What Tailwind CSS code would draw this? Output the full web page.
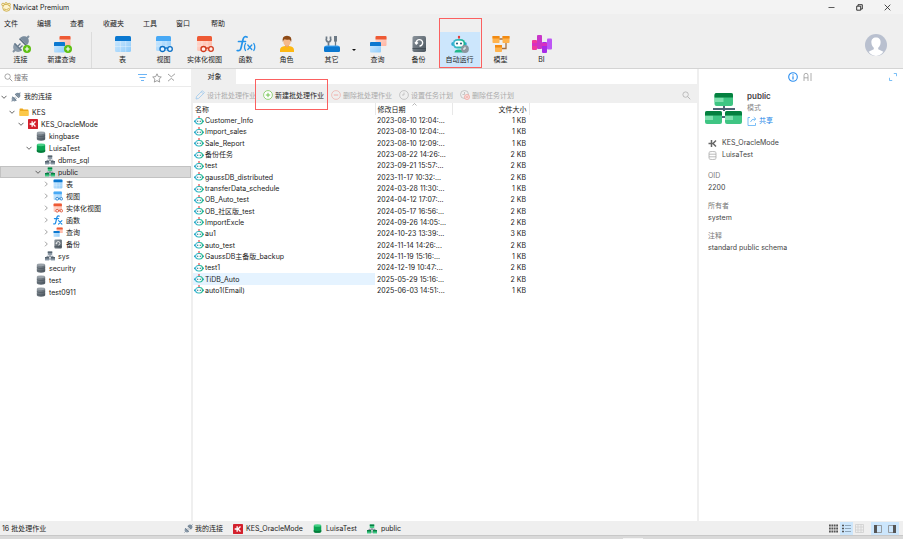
<!DOCTYPE html>
<html lang="zh-CN">

<head>
  <meta charset="UTF-8">
  <meta name="viewport" content="width=device-width, initial-scale=1.0">
  <title>Navicat Premium</title>
  <script src="https://cdn.jsdelivr.net/npm/@tailwindcss/browser@4"></script>
</head>

<body class="flex flex-col h-screen overflow-hidden bg-white font-[Inter,'Noto_Sans_CJK_SC',sans-serif] text-[7px] leading-[11px] text-[#222]">

  <!-- Icon sprites -->
  <svg class="absolute size-0">
    <defs>
      <linearGradient id="g-blue" x1="0" y1="0" x2="1" y2="1"><stop offset="0" stop-color="#d4ecff"/><stop offset="1" stop-color="#8ecbfa"/></linearGradient>
      <linearGradient id="g-red" x1="0" y1="0" x2="1" y2="1"><stop offset="0" stop-color="#ffe0d8"/><stop offset="1" stop-color="#ffb3a0"/></linearGradient>
      <linearGradient id="g-teal" x1="0" y1="0" x2="1" y2="0"><stop offset="0" stop-color="#3fb8d8"/><stop offset="1" stop-color="#1fb88a"/></linearGradient>
      <linearGradient id="g-gray" x1="0" y1="0" x2="1" y2="1"><stop offset="0" stop-color="#8b949c"/><stop offset="1" stop-color="#4a545d"/></linearGradient>

      <symbol id="i-plug" viewBox="0 0 18 18">
        <path d="M1 17l3-3M14 4l3-3" stroke="#8494a3" stroke-width="2"/>
        <path d="M3 8l7 7c-2 2.500-5.500 2.500-7.500.5S.8 10 3 8z" fill="#8a9aa9"/>
        <path d="M3 8l7 7-1 1-7-7z" fill="#677a8c"/>
        <path d="M6 11l2.500-2.500M8 13l2.500-2.500" stroke="#677a8c" stroke-width="1.300"/>
        <path d="M8 3l7 7c2.300-2 2.500-5.500.5-7.500S10 .8 8 3z" fill="#7b8d9e"/>
        <path d="M8 3l7 7-1.300 1-6.700-6.700z" fill="#5d7082"/>
      </symbol>
      <symbol id="i-plus" viewBox="0 0 8 8">
        <circle cx="4" cy="4" r="4" fill="#5cbf10"/>
        <path d="M4 1.800v4.400M1.800 4h4.400" stroke="#fff" stroke-width="1.100"/>
      </symbol>
      <symbol id="i-table" viewBox="0 0 18 18">
        <rect x="1" y="1" width="16" height="16" rx="1.500" fill="url(#g-blue)"/>
        <path d="M6.300 6v11M11.700 6v11M1 11.500h16" stroke="#fff" stroke-opacity=".45" stroke-width=".7"/>
        <path d="M1 6V2.500Q1 1 2.500 1h13Q17 1 17 2.500V6z" fill="#0b78d0"/>
      </symbol>
      <symbol id="i-view" viewBox="0 0 18 18">
        <rect x="1" y="1" width="15" height="15" rx="1.500" fill="url(#g-blue)"/>
        <path d="M6 6v10M11 6v10M1 11h15" stroke="#fff" stroke-opacity=".45" stroke-width=".7"/>
        <path d="M1 6V2.500Q1 1 2.500 1h12Q16 1 16 2.500V6z" fill="#48a9f5"/>
        <g fill="#eaf5ff" stroke="#0b6fc4" stroke-width="1.300"><circle cx="7.500" cy="14" r="2.500"/><circle cx="15" cy="14" r="2.300"/><path d="M10 13.500q1.200-1.200 2.600 0" fill="none"/></g>
      </symbol>
      <symbol id="i-mview" viewBox="0 0 18 18">
        <rect x="1" y="1" width="15" height="15" rx="1.500" fill="url(#g-red)"/>
        <path d="M6 6v10M11 6v10M1 11h15" stroke="#fff" stroke-opacity=".45" stroke-width=".7"/>
        <path d="M1 6V2.500Q1 1 2.500 1h12Q16 1 16 2.500V6z" fill="#ee5a35"/>
        <g fill="#fff0ec" stroke="#d23a1c" stroke-width="1.300"><circle cx="7.500" cy="14" r="2.500"/><circle cx="15" cy="14" r="2.300"/><path d="M10 13.500q1.200-1.200 2.600 0" fill="none"/></g>
      </symbol>
      <symbol id="i-query" viewBox="0 0 18 18">
        <rect x="6.500" y="1" width="11" height="10" rx="1" fill="url(#g-red)"/>
        <path d="M6.500 4.500V2q0-1 1-1h9q1 0 1 1v2.500z" fill="#ee5a35"/>
        <rect x="1" y="7" width="11" height="10.500" rx="1" fill="url(#g-blue)"/>
        <path d="M1 11V8q0-1 1-1h9q1 0 1 1v3z" fill="#0b78d0"/>
      </symbol>
      <symbol id="i-fx" viewBox="0 0 20 18">
        <g fill="none" stroke="#2493ea" stroke-linecap="round">
          <path d="M11 2q-3-1.500-4 2.500L5 13q-.8 3.500-3.800 2.500M2.500 6.500h7" stroke-width="1.700"/>
          <path d="M9.500 8.500q-2 3.500 0 7M17.800 8.500q2 3.500 0 7M11.800 10l4 4.500M15.800 10l-4 4.500" stroke-width="1.300"/>
        </g>
      </symbol>
      <symbol id="i-fxs" viewBox="0 0 18 18">
        <g fill="none" stroke="#1c8ce6" stroke-linecap="round">
          <path d="M11 2q-3-1.500-4 2.500L5 13q-.8 4-3.800 3M2.500 6.500h7.500" stroke-width="2.200"/>
          <path d="M10 10l6 6.500M16 10l-6 6.500" stroke-width="2"/>
        </g>
      </symbol>
      <symbol id="i-role" viewBox="0 0 18 18">
        <path d="M7 9h4v4H7z" fill="#eba36d"/>
        <path d="M2 17v-2q0-3.500 5-4l2 1.500 2-1.500q5 .5 5 4v2z" fill="#fdb813"/>
        <ellipse cx="9" cy="6.500" rx="3.600" ry="4.300" fill="#f5b98a"/>
        <path d="M4.800 7Q3.600.8 9 .8T13.200 7q-1-2.600-2-2.600-3 .6-4.600-.2Q5.400 5 4.800 7z" fill="#8d4a16"/>
      </symbol>
      <symbol id="i-tools" viewBox="0 0 18 18">
        <path d="M5.500 12V7M5.500 7a2.400 2.400 0 01-2-3.500L3.500 1.500M5.500 7a2.400 2.400 0 002-3.500L7.500 1.500" fill="none" stroke="#6d7a86" stroke-width="1.700"/>
        <path d="M12.500 12V6" stroke="#6d7a86" stroke-width="1.300"/><path d="M11 1h3v5l-.8 1h-1.400L11 6z" fill="#6d7a86"/>
        <path d="M1 12l2-1.500h12l2 1.500z" fill="#48a9f5"/>
        <rect x="1" y="11.500" width="16" height="5.500" rx="1.200" fill="#0b78d0"/>
      </symbol>
      <symbol id="i-backup" viewBox="0 0 18 18">
        <rect x="2.500" y="1" width="13.500" height="16" rx="1.800" fill="url(#g-gray)"/>
        <path d="M2.500 13.500H16" stroke="#3e474f" stroke-width=".8"/>
        <path d="M6.300 8.500A3.200 3.200 0 119.500 11M5 7.200l1.300 1.700L8 7.500" fill="none" stroke="#fff" stroke-width="1.400"/>
      </symbol>
      <symbol id="i-robot" viewBox="0 0 18 18">
        <path d="M8 3v3" stroke="#e04a4a" stroke-width="1"/><circle cx="8" cy="2" r="1.200" fill="#e23d3d"/>
        <rect x=".2" y="7" width="15.600" height="4" rx="2" fill="#2aaad0"/>
        <rect x="1.800" y="4" width="12.400" height="9.500" rx="4.500" fill="url(#g-teal)"/>
        <rect x="3.500" y="5.800" width="9" height="5.800" rx="2.800" fill="#fff"/>
        <circle cx="6" cy="8.500" r="1" fill="#145a73"/><circle cx="10" cy="8.500" r="1" fill="#145a73"/>
        <path d="M3.500 17.500q0-3 4.500-3t4.500 3z" fill="#1fb88a"/>
        <circle cx="14" cy="14" r="3.900" fill="#8c969f"/><path d="M14 11.800V14h-2" fill="none" stroke="#fff"/>
      </symbol>
      <symbol id="i-bot" viewBox="0 0 18 18">
        <path d="M9 0v4" stroke="#e23d3d" stroke-width="2"/>
        <rect x="0" y="7.500" width="18" height="4" rx="2" fill="#1a9fb8"/>
        <rect x="2.800" y="4.500" width="12.400" height="10" rx="5" fill="#fff" stroke="url(#g-teal)" stroke-width="1.900"/>
        <path d="M5.500 9.500h2.200M10.300 9.500h2.200" stroke="#27606f" stroke-width="2"/>
      </symbol>
      <symbol id="i-model" viewBox="0 0 18 18">
        <path d="M6 4h8v9.500H9" fill="none" stroke="#a8703c" stroke-width="1.300"/>
        <g fill="#ffb34d"><rect x=".5" y="1" width="7" height="7" rx=".8"/><rect x="10.500" y="1" width="7" height="7" rx=".8"/><rect x="3" y="10" width="7" height="7" rx=".8"/></g>
        <path d="M.5 3.500V1h7v2.500zM10.500 3.500V1h7v2.500zM3 12.500V10h7v2.500z" fill="#f28a12"/>
      </symbol>
      <symbol id="i-bi" viewBox="0 0 20 18">
        <rect x="0" y="5" width="5" height="10" rx="1" fill="#ee3a9c"/><rect x="5" y="0" width="5" height="14" rx="1" fill="#c936c9"/>
        <rect x="10" y="7" width="5" height="11" rx="1" fill="#a62ce8"/><rect x="15" y="3.500" width="5" height="11" rx="1" fill="#bd56f5"/>
        <path d="M0 8h5v3H0zM10 8h5v3h-5z" fill="#d92fc0"/>
      </symbol>
      <symbol id="i-folder" viewBox="0 0 18 18">
        <path d="M1 3.500q0-1 1-1h4.500L8 4.500h8q1 0 1 1V15q0 1-1 1H2q-1 0-1-1z" fill="#eda81c"/>
        <path d="M1 7h16v8q0 1-1 1H2q-1 0-1-1z" fill="#fcc84a"/>
      </symbol>
      <symbol id="i-kes" viewBox="0 0 18 18">
        <rect width="18" height="18" rx="1.500" fill="#d3202c"/>
        <path d="M7.500 4v10M13.500 4.500L9 9l4.500 4.500M3 9h6" fill="none" stroke="#fff" stroke-width="2.400"/>
      </symbol>
      <symbol id="i-kmark" viewBox="0 0 18 18">
        <path d="M7 2v14M16 3l-6 6 6 6M1 9h9" fill="none" stroke="#666" stroke-width="3"/>
      </symbol>
      <symbol id="i-db" viewBox="0 0 18 18">
        <path d="M1.500 3.500V15q0 2.500 7.500 2.500t7.500-2.500V3.500z" fill="url(#g-gray)"/>
        <ellipse cx="9" cy="3.200" rx="7.500" ry="2.500" fill="#9aa2a9"/>
        <path d="M1.500 8q2 2 7.500 2t7.500-2M1.500 12.500q2 2 7.500 2t7.500-2" fill="none" stroke="#454e56" stroke-width=".9"/>
      </symbol>
      <symbol id="i-dbon" viewBox="0 0 18 18">
        <path d="M1.500 3.500V15q0 2.500 7.500 2.500t7.500-2.500V3.500z" fill="#0ba552"/>
        <ellipse cx="9" cy="3.200" rx="7.500" ry="2.500" fill="#47cf86"/>
        <path d="M1.500 12q2 2 7.500 2t7.500-2v3q0 2.500-7.500 2.500T1.500 15z" fill="#067a3b"/>
      </symbol>
      <symbol id="i-schema" viewBox="0 0 18 18">
        <path d="M9 6v4M3.500 12v-2.500h11V12M6 14.500h6" fill="none" stroke="#526272" stroke-width="1.300"/>
        <g fill="#8795a3"><rect x="5" y="1" width="8" height="6"/><rect x="0" y="11" width="7.500" height="6"/><rect x="10.500" y="11" width="7.500" height="6"/></g>
        <path d="M5 1h8v2.500H5zM0 11h7.500v2.500H0zM10.500 11H18v2.500h-7.500z" fill="#56646f"/>
      </symbol>
      <symbol id="i-schemaon" viewBox="0 0 18 18">
        <path d="M9 6v4M3.500 12v-2.500h11V12M6 14.500h6" fill="none" stroke="#526272" stroke-width="1.300"/>
        <g fill="#3cc680"><rect x="5" y="1" width="8" height="6"/><rect x="0" y="11" width="7.500" height="6"/><rect x="10.500" y="11" width="7.500" height="6"/></g>
        <path d="M5 1h8v2.500H5zM0 11h7.500v2.500H0zM10.500 11H18v2.500h-7.500z" fill="#067f42"/>
      </symbol>
      <symbol id="i-search" viewBox="0 0 10 10">
        <circle cx="4" cy="4" r="3" fill="none" stroke="currentColor" stroke-width=".8"/><path d="M6.200 6.200L9.200 9.200" stroke="currentColor" stroke-width=".9"/>
      </symbol>
      <symbol id="i-down" viewBox="0 0 6 6"><path d="M.5 1.800L3 4.300l2.500-2.500" fill="none" stroke="#555" stroke-width=".9"/></symbol>
      <symbol id="i-right" viewBox="0 0 6 6"><path d="M2 .7L4.300 3 2 5.300" fill="none" stroke="#888" stroke-width=".8"/></symbol>
    </defs>
  </svg>

  <!-- Title bar -->
  <header class="flex h-[14px] shrink-0 items-center bg-[#f3f3f3] pl-px pr-3">
    <svg class="size-[10px]" viewBox="0 0 10 10"><g fill="#fdf3cf" stroke="#c9a73c" stroke-width=".8"><circle cx="5.500" cy="5.500" r="3.800"/><circle cx="2" cy="2.500" r="1.300"/><circle cx="5" cy="1.600" r="1.100"/><circle cx="8.200" cy="2.500" r="1.200"/><path d="M3 7q2.500 1.500 5-.5" fill="none"/></g></svg>
    <h1 class="ml-[2px]">Navicat Premium</h1>
    <div class="ml-auto flex items-center gap-[21px]">
      <button aria-label="最小化"><svg class="size-[7px]" viewBox="0 0 7 7"><path d="M.5 3.500h6" stroke="#333" stroke-width=".8"/></svg></button>
      <button aria-label="还原"><svg class="size-[7px]" viewBox="0 0 7 7"><path d="M.7 2.200h4v4h-4zM2 2V.7h4.300V5H5" fill="none" stroke="#222" stroke-width=".9"/></svg></button>
      <button aria-label="关闭"><svg class="size-[7px]" viewBox="0 0 7 7"><path d="M.7.7l5.600 5.600M6.300.7L.7 6.300" stroke="#222" stroke-width=".8"/></svg></button>
    </div>
  </header>

  <!-- Menu -->
  <nav class="flex h-[18px] shrink-0 items-center gap-[19px] bg-[#efefef] pl-1">
    <button>文件</button>
    <button>编辑</button>
    <button>查看</button>
    <button>收藏夹</button>
    <button>工具</button>
    <button>窗口</button>
    <button class="ml-[2px]">帮助</button>
  </nav>

  <!-- Main toolbar -->
  <div class="flex h-[37px] shrink-0 items-stretch border-b border-[#d4d4d4] bg-[#efefef] whitespace-nowrap">
    <button class="relative flex w-[41px] flex-col items-center pt-[3px]">
      <svg class="size-[18px]"><use href="#i-plug"/></svg>
      <svg class="absolute left-[23px] top-[13px] size-[8px]"><use href="#i-plus"/></svg>
      <span class="mt-px">连接</span>
    </button>
    <button class="relative flex w-[41px] flex-col items-center pt-[3px]">
      <svg class="size-[18px]"><use href="#i-query"/></svg>
      <svg class="absolute left-[23px] top-[13px] size-[8px]"><use href="#i-plus"/></svg>
      <span class="mt-px">新建查询</span>
    </button>
    <div class="mr-[10px] w-[10px] border-r border-[#dcdcdc]"></div>
    <button class="flex w-[41px] flex-col items-center pt-[3px]"><svg class="size-[18px]"><use href="#i-table"/></svg><span class="mt-px">表</span></button>
    <button class="flex w-[41px] flex-col items-center pt-[3px]"><svg class="size-[18px]"><use href="#i-view"/></svg><span class="mt-px">视图</span></button>
    <button class="flex w-[41px] flex-col items-center pt-[3px]"><svg class="size-[18px]"><use href="#i-mview"/></svg><span class="mt-px">实体化视图</span></button>
    <button class="flex w-[41px] flex-col items-center pt-[3px]"><svg class="h-[18px] w-[20px]"><use href="#i-fx"/></svg><span class="mt-px">函数</span></button>
    <button class="flex w-[41px] flex-col items-center pt-[3px]"><svg class="size-[18px]"><use href="#i-role"/></svg><span class="mt-px">角色</span></button>
    <button class="ml-1 flex w-[41px] flex-col items-center pt-[3px]"><svg class="size-[18px]"><use href="#i-tools"/></svg><span class="mt-px">其它</span></button>
    <button class="flex w-[5px] items-center" aria-label="更多"><svg class="h-[2px] w-[4px]" viewBox="0 0 4 2"><path d="M0 0h4L2 2z" fill="#111"/></svg></button>
    <button class="flex w-[41px] flex-col items-center pt-[3px]"><svg class="size-[18px]"><use href="#i-query"/></svg><span class="mt-px">查询</span></button>
    <button class="flex w-[41px] flex-col items-center pt-[3px]"><svg class="size-[18px]"><use href="#i-backup"/></svg><span class="mt-px">备份</span></button>
    <button class="relative flex w-[41px] flex-col items-center bg-[#cce6fc] pt-[3px]">
      <svg class="size-[18px]"><use href="#i-robot"/></svg><span class="mt-px">自动运行</span>
      <span class="absolute -top-[14px] bottom-0 left-0 -right-[2px] z-10 border border-[#fb6060]"></span>
    </button>
    <button class="flex w-[41px] flex-col items-center pt-[3px]"><svg class="size-[18px]"><use href="#i-model"/></svg><span class="mt-px">模型</span></button>
    <button class="flex w-[41px] flex-col items-center pt-[3px]"><svg class="h-[18px] w-[20px]"><use href="#i-bi"/></svg><span class="mt-px">BI</span></button>
    <button class="mr-4 ml-auto" aria-label="用户">
      <svg class="-mt-[10px] size-[22px]" viewBox="0 0 22 22"><circle cx="11" cy="11" r="11" fill="#b9c0cf"/><path d="M11 3.500c3 0 4.800 2 4.600 5-.1 2.500-1 4-2.400 5.200v1.500l5.200 2.600A11 11 0 0111 22a11 11 0 01-7.400-4.200l5.200-2.600v-1.500C7.400 12.500 6.500 11 6.400 8.500 6.200 5.500 8 3.500 11 3.500z" fill="#fff"/></svg>
    </button>
  </div>

  <div class="flex min-h-0 flex-1">
    <!-- Connection tree -->
    <aside class="flex w-[193px] shrink-0 flex-col border-r-2 border-[#efefef]">
      <div class="flex h-[18px] shrink-0 items-center border-b border-[#ebebeb] pr-[15px] pl-1 text-[#888]">
        <svg class="size-[9px]"><use href="#i-search"/></svg>
        <input type="text" aria-label="搜索" placeholder="搜索" class="ml-px min-w-0 flex-1 outline-none placeholder:text-[#777]">
        <div class="flex items-center gap-[5px]">
          <button aria-label="筛选"><svg class="size-[9px]" viewBox="0 0 9 9"><path d="M0 1.500h9M1.500 4.500h6M3 7.500h3" stroke="#6cb4f5"/></svg></button>
          <button aria-label="收藏"><svg class="size-[10px]" viewBox="0 0 10 10"><path d="M5 .8l1.300 2.800 3 .4-2.200 2.100.6 3L5 7.600 2.300 9.100l.6-3L.7 4l3-.4z" fill="none" stroke="#888" stroke-width=".8"/></svg></button>
          <button aria-label="折叠"><svg class="size-[9px]" viewBox="0 0 9 9"><path d="M1 1l3.300 2.800L8 .8M1 8.200l3.300-2.800L7 7.500" fill="none" stroke="#888" stroke-width=".8"/></svg></button>
        </div>
      </div>
      <ul id="tree"></ul>
    </aside>

    <!-- Objects -->
    <main class="flex min-w-0 flex-1 flex-col">
      <div class="flex h-[15px] shrink-0">
        <button class="w-[43px] bg-[#efefef]">对象</button>
      </div>
      <div class="flex h-[19px] shrink-0 items-center bg-[#efefef] pt-[3px] pr-[6px] pl-[2px] whitespace-nowrap text-[#aaa]">
        <button class="flex items-center gap-[2px]" disabled>
          <svg class="size-[10px]" viewBox="0 0 10 10"><path d="M1 9l.6-2.600L7.400.7l2 2L3.600 8.400zM6.300 1.800l2 2" fill="none" stroke="#9cc8ee" stroke-width=".8"/></svg>设计批处理作业</button>
        <button class="relative ml-[7px] flex items-center gap-[2px] text-[#222]">
          <svg class="size-[10px]" viewBox="0 0 10 10"><circle cx="5" cy="5" r="4.400" fill="#fff" stroke="#7cc95a" stroke-width=".8"/><path d="M5 2.800v4.400M2.800 5h4.400" stroke="#6abf45" stroke-width=".9"/></svg>新建批处理作业
          <span class="absolute -top-[11px] -bottom-[9px] -left-[8px] -right-[4px] z-10 border border-[#fb6060]"></span>
        </button>
        <button class="ml-[7px] flex items-center gap-[2px]" disabled>
          <svg class="size-[10px]" viewBox="0 0 10 10"><circle cx="5" cy="5" r="4.400" fill="none" stroke="#f0b5b0" stroke-width=".8"/><path d="M2.800 5h4.400" stroke="#f0a5a0" stroke-width=".9"/></svg>删除批处理作业</button>
        <button class="ml-[7px] flex items-center gap-[2px]" disabled>
          <svg class="size-[10px]" viewBox="0 0 10 10"><circle cx="5" cy="5" r="4.400" fill="none" stroke="#bbb" stroke-width=".8"/><path d="M5 2.500V5H3" fill="none" stroke="#bbb" stroke-width=".8"/></svg>设置任务计划</button>
        <button class="ml-[7px] flex items-center gap-[2px]" disabled>
          <svg class="size-[10px]" viewBox="0 0 10 10"><circle cx="4.500" cy="4.500" r="4" fill="none" stroke="#bbb" stroke-width=".8"/><path d="M4.500 2v2.500h-2" fill="none" stroke="#bbb" stroke-width=".8"/><circle cx="7" cy="7" r="2.500" fill="#fbe3e1" stroke="#ee9a94" stroke-width=".7"/><path d="M5.800 7h2.400" stroke="#e5766e" stroke-width=".7"/></svg>删除任务计划</button>
        <button class="ml-auto" aria-label="搜索对象"><svg class="size-[9px]"><use href="#i-search"/></svg></button>
      </div>
      <table class="h-[193px] w-full table-fixed border-collapse">
        <thead>
          <tr class="h-[12px] text-left">
            <th class="w-[182px] border-r border-[#e8e8e8] p-0 pl-[2px] font-normal">名称</th>
            <th class="relative w-[77px] border-r border-[#e8e8e8] p-0 pl-[2px] font-normal">修改日期
              <svg class="absolute top-0 left-[36px] h-[3px] w-[5px]" viewBox="0 0 5 3"><path d="M.5 2.500l2-2 2 2" fill="none" stroke="#888" stroke-width=".6"/></svg>
            </th>
            <th class="w-[77px] border-r border-[#e8e8e8] p-0 pr-[2px] text-right font-normal">文件大小</th>
            <th class="p-0"></th>
          </tr>
        </thead>
        <tbody id="jobs"></tbody>
      </table>
    </main>

    <!-- Details -->
    <aside class="w-[206px] shrink-0 border-l-2 border-[#efefef] text-[#444]">
      <div class="flex h-[15px] items-center pr-[6px] pl-[89px]">
        <button aria-label="信息"><svg class="size-[10px]" viewBox="0 0 10 10"><circle cx="5" cy="5" r="4.300" fill="none" stroke="#2b8ef0" stroke-width="1.100"/><path d="M5 4.300V7.500M5 2.300v1.100" stroke="#2b8ef0" stroke-width="1.200"/></svg></button>
        <button aria-label="AI" class="ml-[5px]"><svg class="size-[10px]" viewBox="0 0 10 10"><path d="M1 9V3.500Q1 1.300 3 1.300T5 3.500V9M1 5.800h4M8 1v8" fill="none" stroke="#999" stroke-width=".8"/></svg></button>
        <button aria-label="展开" class="ml-auto"><svg class="size-[8px]" viewBox="0 0 8 8"><path d="M4.800.5h2.700v2.700M.5 4.800v2.700h2.700" fill="none" stroke="#58aef5" stroke-width=".8"/></svg></button>
      </div>
      <div class="flex pt-[6px] pl-[6px]">
        <svg class="h-[36px] w-[37px]" viewBox="0 0 37 36">
          <path d="M19 12v9M8 19h22M12 27h12" fill="none" stroke="#4f6275" stroke-width="2"/>
          <g fill="#3fc583"><rect x="9.500" y="3" width="18.500" height="13" rx="2"/><rect x="0" y="21" width="17" height="13" rx="2"/><rect x="20" y="21" width="17" height="13" rx="2"/></g>
          <path d="M9.500 7.500h9V12h-9zM0 25.500h8V30H0zM20 25.500h8V30h-8z" fill="#7ee0ae"/>
          <path d="M9.500 7.500V5q0-2 2-2H26q2 0 2 2v2.500zM0 25.500V23q0-2 2-2h13q2 0 2 2v2.500zM20 25.500V23q0-2 2-2h13q2 0 2 2v2.500z" fill="#04803f"/>
        </svg>
        <div class="pl-[5px]">
          <h2 class="text-[8px] leading-[12px] font-semibold">public</h2>
          <p class="leading-[12px] text-[#888]">模式</p>
          <a href="#" class="flex items-center gap-[2px] leading-[13px] text-[#1a86e8]">
            <svg class="size-[10px]" viewBox="0 0 10 10"><path d="M3 1.500H1v8h7.500V7M3.500 6q.5-3 5-3M6.800 1.200L8.800 3 6.800 4.800" fill="none" stroke="#5aaef5" stroke-width=".8"/></svg>共享</a>
        </div>
      </div>
      <div class="pt-[10px] pl-[9px] leading-[12px]">
        <p class="flex items-center gap-[5px]"><svg class="size-[9px]"><use href="#i-kmark"/></svg>KES_OracleMode</p>
        <p class="flex items-center gap-[5px]"><svg class="size-[9px]" viewBox="0 0 9 9"><path d="M1 1.500q0-1 3.500-1t3.500 1v6q0 1-3.500 1T1 7.500zM1 3.200h7M1 5.800h7" fill="none" stroke="#aaa" stroke-width=".8"/></svg>LuisaTest</p>
        <dl class="pt-[9px]">
          <dt class="text-[#777]">OID</dt>
          <dd class="mb-[6px]">2200</dd>
          <dt class="text-[#777]">所有者</dt>
          <dd class="mb-[6px]">system</dd>
          <dt class="text-[#777]">注释</dt>
          <dd>standard public schema</dd>
        </dl>
      </div>
    </aside>
  </div>

  <!-- Status bar -->
  <footer class="shrink-0">
    <div class="flex h-[15px] items-center border-b border-[#c8c8c8] bg-[#efefef] pt-px whitespace-nowrap">
      <p class="w-[184px] pl-[2px]">16 批处理作业</p>
      <p class="flex items-center gap-[2px]"><svg class="size-[9px]"><use href="#i-plug"/></svg>我的连接</p>
      <p class="ml-[10px] flex items-center gap-[3px]"><svg class="size-[10px]"><use href="#i-kes"/></svg>KES_OracleMode</p>
      <p class="ml-[10px] flex items-center gap-[4px]"><svg class="size-[9px]"><use href="#i-dbon"/></svg>LuisaTest</p>
      <p class="ml-[10px] flex items-center gap-[4px]"><svg class="size-[10px]"><use href="#i-schemaon"/></svg>public</p>
      <div class="mr-[4px] ml-auto flex items-center">
        <button aria-label="图标" class="flex h-[13px] w-[13px] items-center justify-center"><svg class="size-[9px]" viewBox="0 0 9 9"><path d="M0 1.500h9M0 4.500h9M0 7.500h9" stroke="#555" stroke-width="2" stroke-dasharray="1.800 .6"/></svg></button>
        <button aria-label="列表" class="flex h-[13px] w-[13px] items-center justify-center bg-[#cce6fc]"><svg class="size-[9px]" viewBox="0 0 9 9"><path d="M0 1.500h2M0 4.500h2M0 7.500h2" stroke="#555" stroke-width="1.500"/><path d="M3 1.500h6M3 4.500h6M3 7.500h6" stroke="#8fa5b8"/></svg></button>
        <button aria-label="ER 图表" class="flex h-[13px] w-[13px] items-center justify-center"><svg class="size-[9px]" viewBox="0 0 9 9"><path d="M.5.5h8v8h-8zM3 0v9M6 0v9M0 3h9M0 6h9" fill="none" stroke="#d2d2d2" stroke-width=".9"/></svg></button>
        <button aria-label="左窗格" class="ml-[5px] flex h-[13px] w-[14px] items-center justify-center bg-[#cce6fc]"><svg class="size-[8px]" viewBox="0 0 8 8"><path d="M.5.5h7v7h-7z" fill="none" stroke="#888" stroke-width=".8"/><path d="M0 0h3v8H0z" fill="#555"/></svg></button>
        <button aria-label="右窗格" class="flex h-[13px] w-[14px] items-center justify-center bg-[#cce6fc]"><svg class="size-[8px]" viewBox="0 0 8 8"><path d="M.5.5h7v7h-7z" fill="none" stroke="#888" stroke-width=".8"/><path d="M5 0h3v8H5z" fill="#555"/></svg></button>
      </div>
    </div>
    <div class="flex h-[3px] items-end bg-[#d9d9d9] pl-[69%]"><div class="h-px w-[20px] bg-[#f3f3f3]"></div></div>
  </footer>

  <script>
    // [depth, arrow, icon, label]
    const nodes = [
      [0, 'down', 'plug', '我的连接'],
      [1, 'down', 'folder', 'KES'],
      [2, 'down', 'kes', 'KES_OracleMode'],
      [3, '', 'db', 'kingbase'],
      [3, 'down', 'dbon', 'LuisaTest'],
      [4, '', 'schema', 'dbms_sql'],
      [4, 'down', 'schemaon', 'public'],
      [5, 'right', 'table', '表'],
      [5, 'right', 'view', '视图'],
      [5, 'right', 'mview', '实体化视图'],
      [5, 'right', 'fxs', '函数'],
      [5, 'right', 'query', '查询'],
      [5, 'right', 'backup', '备份'],
      [4, '', 'schema', 'sys'],
      [3, '', 'db', 'security'],
      [3, '', 'db', 'test'],
      [3, '', 'db', 'test0911'],
    ];
    const pads = ['pl-px', 'pl-[9px]', 'pl-[18px]', 'pl-[26px]', 'pl-[35px]', 'pl-[43px]'];

    document.getElementById('tree').innerHTML = nodes.map(([depth, arrow, icon, label]) => {
      const height = depth === 0 ? 'h-[19px]' : 'h-[12px]';
      const state = label === 'public' ? 'bg-[#d9d9d9] outline -outline-offset-1 outline-[#c2c2c2]' : '';
      return `<li class="flex items-center ${height} ${pads[depth]} ${state}">
        <svg class="size-[6px]">${arrow ? `<use href="#i-${arrow}"/>` : ''}</svg>
        <svg class="ml-[4px] mr-[3px] size-[10px]"><use href="#i-${icon}"/></svg>${label}</li>`;
    }).join('');

    const jobs = [
      ['Customer_Info', '2023-08-10 12:04:...', 1],
      ['Import_sales', '2023-08-10 12:04:...', 1],
      ['Sale_Report', '2023-08-10 12:09:...', 1],
      ['备份任务', '2023-08-22 14:26:...', 2],
      ['test', '2023-09-21 15:57:...', 2],
      ['gaussDB_distributed', '2023-11-17 10:32:...', 2],
      ['transferData_schedule', '2024-03-28 11:30:...', 1],
      ['OB_Auto_test', '2024-04-12 17:07:...', 2],
      ['OB_社区版_test', '2024-05-17 16:56:...', 2],
      ['ImportExcle', '2024-09-26 14:05:...', 2],
      ['au1', '2024-10-23 13:39:...', 3],
      ['auto_test', '2024-11-14 14:26:...', 2],
      ['GaussDB主备版_backup', '2024-11-19 15:16:...', 1],
      ['test1', '2024-12-19 10:47:...', 2],
      ['TiDB_Auto', '2025-05-29 15:16:...', 2],
      ['auto1(Email)', '2025-06-03 14:51:...', 1],
    ];

    document.getElementById('jobs').innerHTML = jobs.map(([name, date, size]) => `
      <tr>
        <td class="p-0 pl-px ${name === 'TiDB_Auto' ? 'bg-[#e5f3ff]' : ''}">
          <div class="flex items-center gap-px"><svg class="size-[10px]"><use href="#i-bot"/></svg>${name}</div>
        </td>
        <td class="p-0 pl-[2px] whitespace-nowrap">${date}</td>
        <td class="p-0 pr-[3px] text-right">${size} KB</td>
        <td class="p-0"></td>
      </tr>`).join('');
  </script>
</body>

</html>
